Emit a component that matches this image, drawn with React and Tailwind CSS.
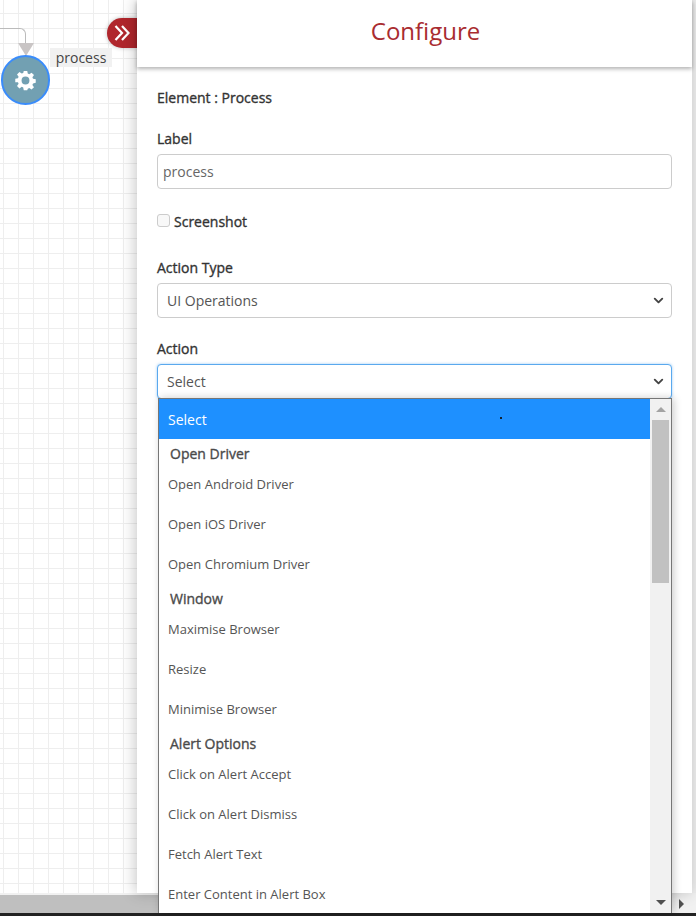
import React from 'react';
import { ChevronDown } from 'lucide-react';

const groups = [
  { name: 'Open Driver', items: ['Open Android Driver', 'Open iOS Driver', 'Open Chromium Driver'] },
  { name: 'Window', items: ['Maximise Browser', 'Resize', 'Minimise Browser'] },
  { name: 'Alert Options', items: ['Click on Alert Accept', 'Click on Alert Dismiss', 'Fetch Alert Text', 'Enter Content in Alert Box'] },
];

const Gear = () => (
  <svg width="21" height="21" viewBox="0 0 24 24">
    <path
      fill="#fff"
      fillRule="evenodd"
      d="M10 1h4l.6 3.100 1.700.7 2.600-1.800 2.800 2.800-1.800 2.600.7 1.700 3.100.6v4l-3.100.6-.7 1.700 1.800 2.600-2.800 2.800-2.600-1.800-1.700.7L14 23h-4l-.6-3.100-1.700-.7-2.600 1.800-2.800-2.800 1.800-2.600-.7-1.700L.3 14v-4l3.100-.6.7-1.700L2.300 5.100 5.100 2.300l2.600 1.800 1.700-.7z M12 7.500a4.500 4.500 0 1 0 0 9 4.500 4.500 0 0 0 0-9z"
    />
  </svg>
);

const Canvas = () => (
  <div className="relative w-[137px] shrink-0 bg-white bg-[linear-gradient(#eeeeee_1px,transparent_1px),linear-gradient(90deg,#eeeeee_1px,transparent_1px)] bg-[length:15px_15px] bg-[position:3px_13px]">
    {/* connector */}
    <div className="absolute left-0 top-[28px] w-[26px] h-[16px] border-t border-r border-[#bbb] rounded-tr-[6px]" />
    <div className="absolute left-[18px] top-[43px] w-0 h-0 border-x-[8px] border-x-transparent border-t-[13px] border-t-[#c9c5c5]" />
    <div className="absolute left-[1px] top-[55px] w-[49px] h-[50px] rounded-full bg-[#72a0b2] border-2 border-[#3a8cfb] flex items-center justify-center">
      <Gear />
    </div>
    <div className="absolute left-[50px] top-[48px] h-[19px] w-[62px] bg-[#f1f1f1] text-[14px] leading-[19px] text-[#444] text-center">process</div>
    <button className="absolute left-[107px] top-[18px] w-[30px] h-[30px] bg-[#b0262c] rounded-l-[15px] flex items-center justify-center shadow-[0_0_4px_rgba(0,0,0,0.25)]">
      <svg width="16" height="16" viewBox="0 0 16 16" fill="none" stroke="#fff" strokeWidth="2.200">
        <path d="M1.500 1l6.500 7-6.500 7M8 1l6.500 7L8 15" />
      </svg>
    </button>
  </div>
);

const Select = ({ value, className }) => (
  <div className={`h-[35px] rounded-[4px] border flex items-center justify-between pl-[9px] pr-[5px] text-[14px] text-[#555] bg-white ${className}`}>
    <span>{value}</span>
    <ChevronDown size={15} strokeWidth={3} className="text-[#444]" />
  </div>
);

const Dropdown = () => (
  <div className="absolute left-[158px] top-[398px] w-[514px] h-[515px] bg-white border border-[#767676] border-b-0 flex overflow-hidden text-[13px] text-[#555] shadow-[2px_0_8px_rgba(0,0,0,0.2)]">
    <div className="flex-1 min-w-0">
      <div className="relative h-[40px] bg-[#1e90ff] text-white text-[14px] flex items-center pl-[9px]">
        Select
        <span className="absolute left-[341px] top-[18px] w-[2px] h-[2px] bg-[#123]" />
      </div>
      {groups.map((g) => (
        <div key={g.name}>
          <div className="h-[25px] pt-[5px] pl-[11px] leading-[20px] text-[14px] font-medium [-webkit-text-stroke:0.35px] text-[#4a4a4a]">{g.name}</div>
          {g.items.map((item) => (
            <div key={item} className="h-[40px] pt-[2px] flex items-center pl-[9px]">{item}</div>
          ))}
        </div>
      ))}
    </div>
    <div className="relative w-[21px] shrink-0 bg-[#f1f1f1] flex flex-col items-center">
      <div className="h-[21px] flex items-center justify-center">
        <div className="w-0 h-0 border-x-[5px] border-x-transparent border-b-[5px] border-b-[#a3a3a3]" />
      </div>
      <div className="w-[17px] h-[163px] bg-[#c1c1c1]" />
      <div className="absolute bottom-[8px] w-0 h-0 border-x-[5px] border-x-transparent border-t-[5px] border-t-[#505050]" />
    </div>
  </div>
);

const Panel = () => (
  <div className="relative flex-1 bg-white shadow-[-2px_0_14px_rgba(0,0,0,0.22)]">
    <div className="h-[67px] flex items-center justify-center text-[24px] text-[#a92c30] shadow-[0_2px_4px_rgba(0,0,0,0.3)] pb-[6px] pl-[22px]">Configure</div>
    <div className="pl-[20px] pr-[20px] text-[14px] text-[#333]">
      <div className="mt-[21px] h-[20px] leading-[20px] font-medium [-webkit-text-stroke:0.35px]">Element : Process</div>
      <div className="mt-[21px] h-[20px] leading-[20px] font-medium [-webkit-text-stroke:0.35px]">Label</div>
      <div className="mt-[5px] h-[35px] rounded-[4px] border border-[#ccc] flex items-center pl-[5px] text-[#666]">process</div>
      <div className="mt-[22px] h-[20px] flex items-center font-medium [-webkit-text-stroke:0.35px]">
        <span className="w-[13px] h-[13px] rounded-[3px] border border-[#ccc] bg-[#f8f8f8] mr-[4px] -mt-[1px]" />
        Screenshot
      </div>
      <div className="mt-[27px] h-[20px] leading-[20px] font-medium [-webkit-text-stroke:0.35px]">Action Type</div>
      <Select value="UI Operations" className="mt-[5px] border-[#ccc]" />
      <div className="mt-[21px] h-[20px] leading-[20px] font-medium [-webkit-text-stroke:0.35px]">Action</div>
      <Select value="Select" className="mt-[5px] border-[#5aa9ee] shadow-[0_0_3px_rgba(90,169,238,0.6)]" />
    </div>
  </div>
);

export default function App() {
  return (
    <div className="relative w-[696px] h-[916px] overflow-hidden flex flex-col bg-white font-['Open_Sans',sans-serif]">
      <div className="flex-1 min-h-0 flex">
        <Canvas />
        <Panel />
        <div className="w-[4px] shrink-0 bg-[#eeeeee]" />
      </div>
      <div className="h-[20px] shrink-0 bg-[#f1f1f1] pt-[2px] flex">
        <div className="flex-1 bg-[#bfbfbf]" />
        <div className="relative w-[24px] flex items-center">
          <div className="ml-[7px] w-0 h-0 border-y-[5px] border-y-transparent border-l-[5px] border-l-[#505050]" />
        </div>
      </div>
      <div className="h-[3px] shrink-0 bg-[#222]" />
      <Dropdown />
    </div>
  );
}
